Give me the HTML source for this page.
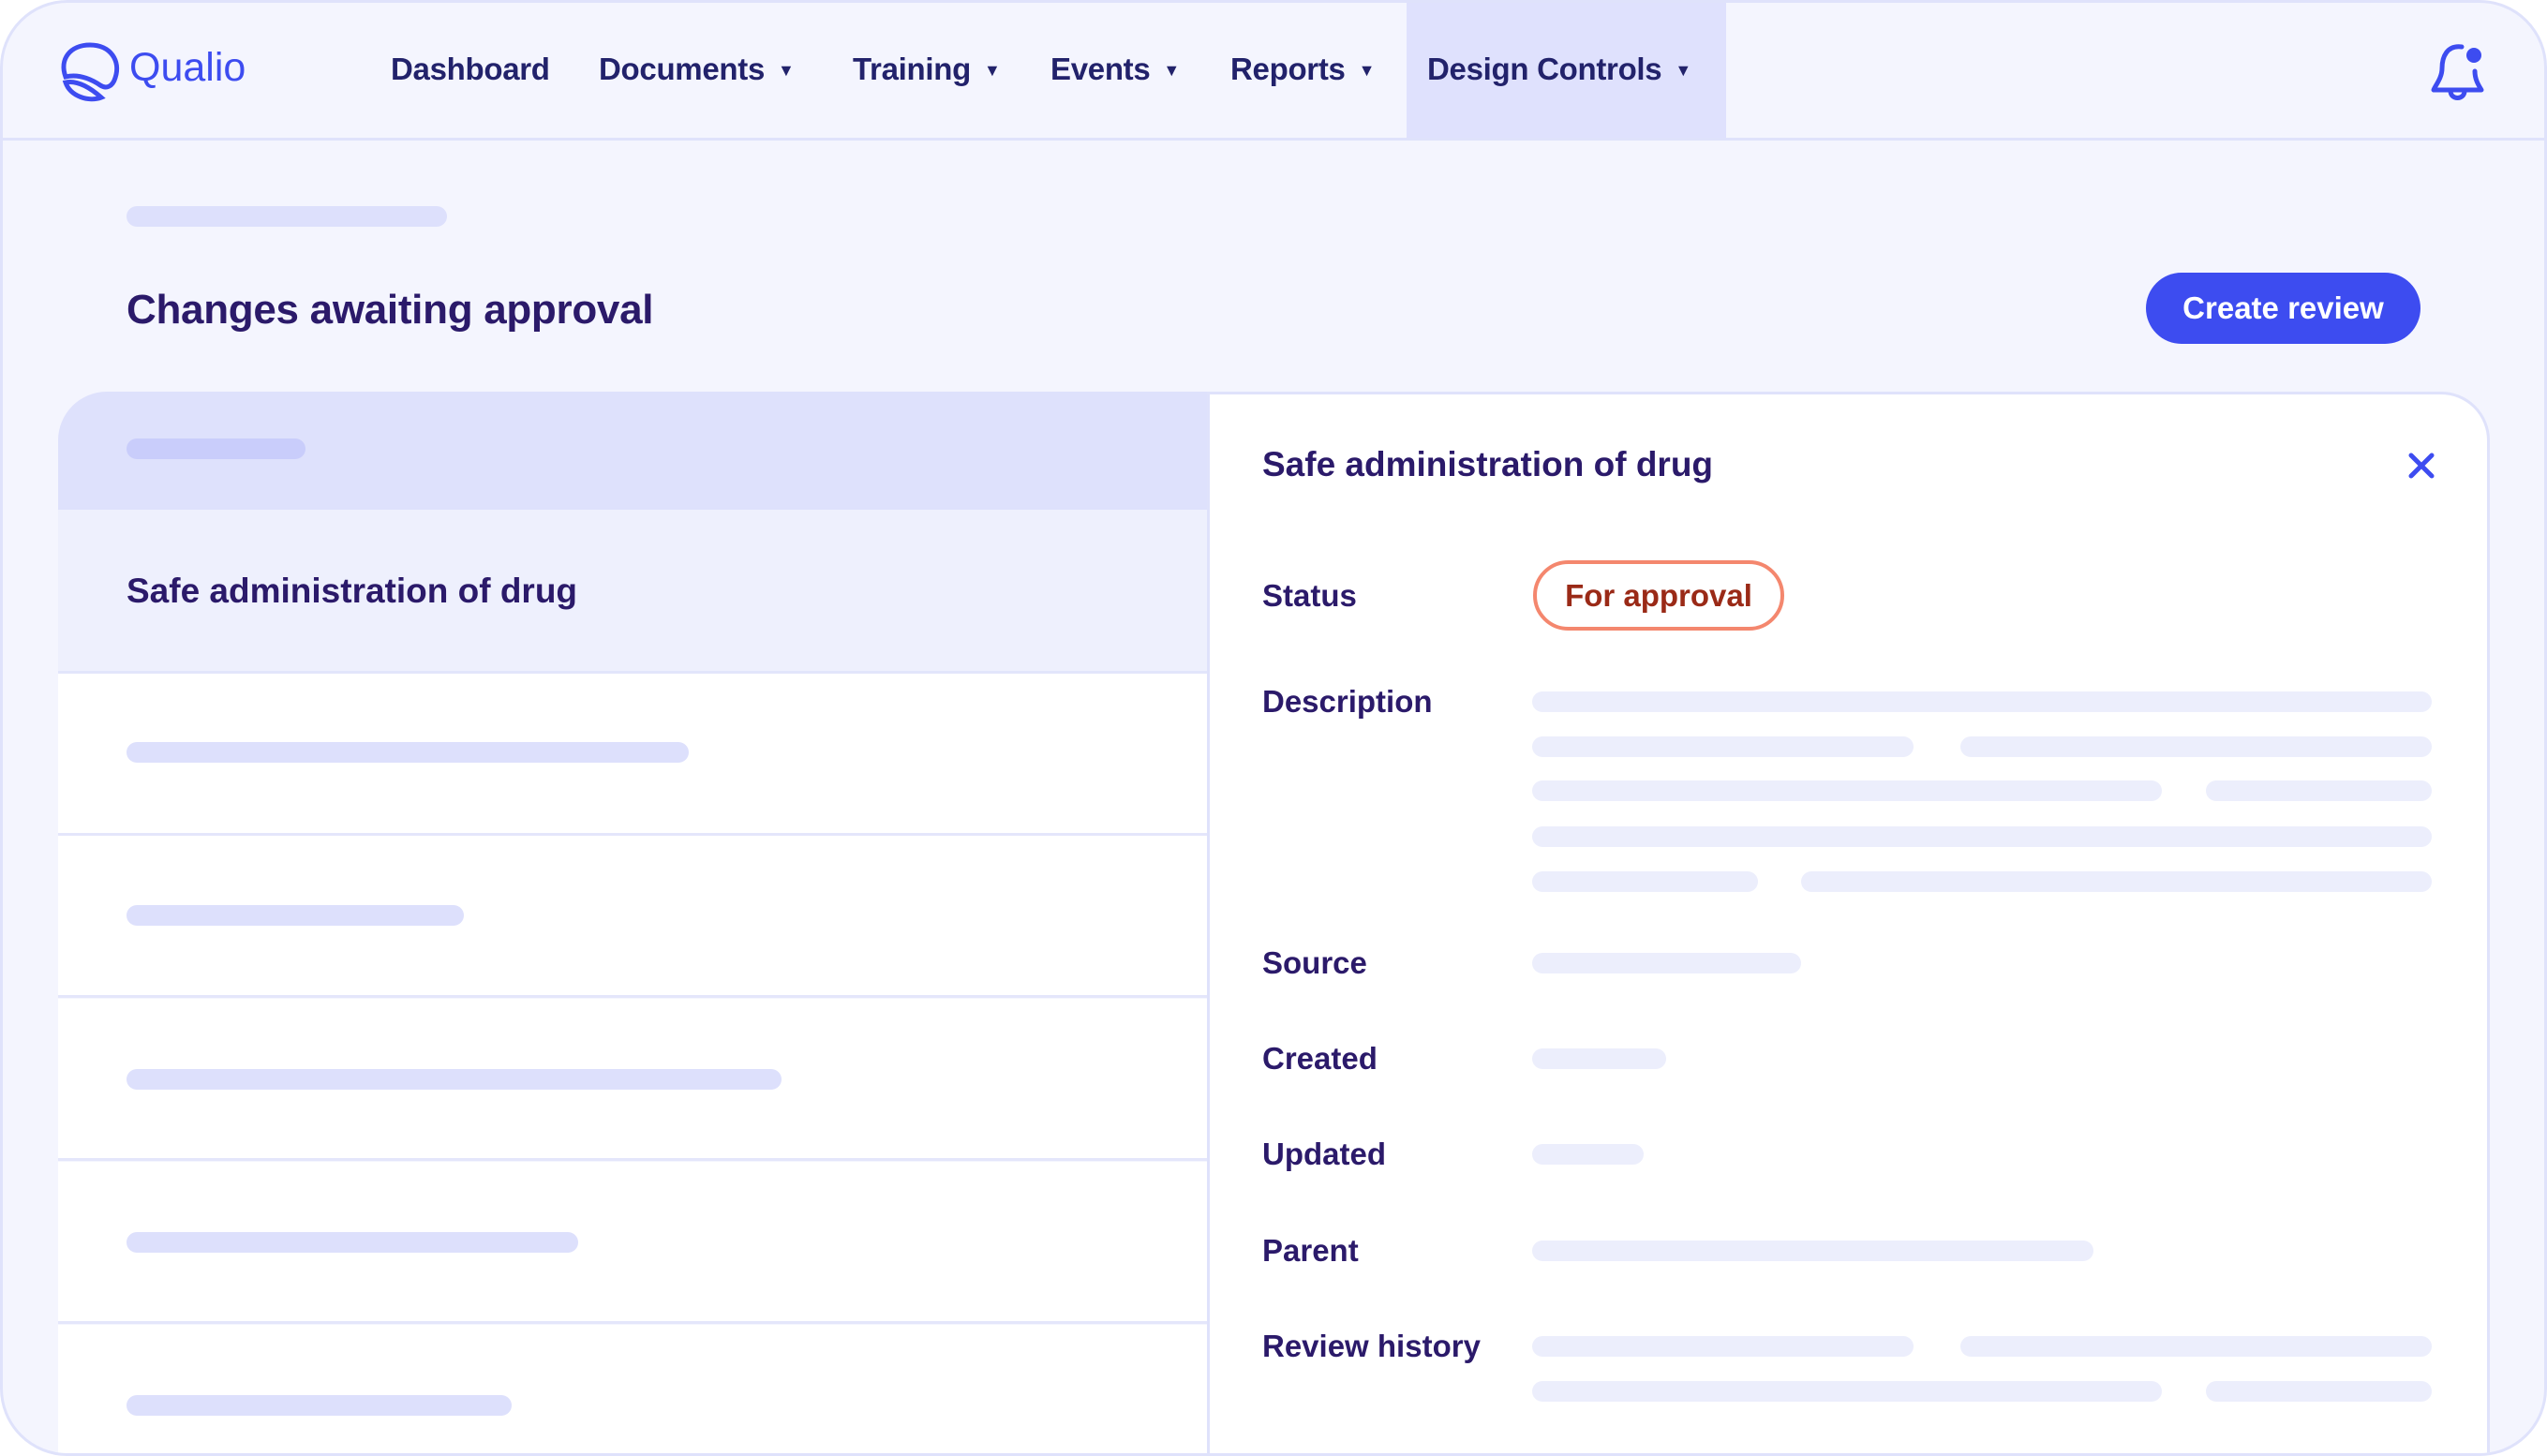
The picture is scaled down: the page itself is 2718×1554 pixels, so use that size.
<!DOCTYPE html>
<html><head><meta charset="utf-8"><style>
*{margin:0;padding:0;box-sizing:border-box}
body{width:2718px;height:1554px;overflow:hidden;background:#fff;font-family:"Liberation Sans",sans-serif;position:relative}
.frame{position:absolute;left:0;top:0;width:2718px;height:1554px;border:3px solid #dfe2fb;border-radius:72px;background:#f4f5fe;overflow:hidden}
.abs{position:absolute}
.nav{position:absolute;top:0;left:0;right:0;height:147px;border-bottom:3px solid #dfe2fb}
.ni{position:absolute;top:52px;font-size:33px;font-weight:bold;color:#22226b;white-space:nowrap;letter-spacing:-0.3px}
.ni .c{font-size:18px;margin-left:14px;vertical-align:4px}
.bar{position:absolute;height:22px;border-radius:11px;background:#eceefc}
.lbar{background:#dde0fc}
.lab{position:absolute;left:1347px;font-size:33px;font-weight:bold;color:#2b1a6a;transform:translateY(-50%);white-space:nowrap}
.row{position:absolute;left:62px;width:1226px;height:173px;background:#fff;border-bottom:3px solid #e4e6fb}
</style></head><body>
<div class="frame">
 <div class="nav">
  <svg class="abs" style="left:58px;top:40px" width="70" height="70" viewBox="58 40 70 70" fill="none" stroke="#3d4cf0" stroke-width="5" stroke-linecap="round">
   <path d="M67 79 C60 60 72 45 93 45 C115 45 126 62 120 80 C117 90 110 92 104 88 C92 80 80 76 67 79 Z"/>
   <path d="M67 85 C80 82 95 92 105 101 C92 106 72 100 67 85 Z"/>
  </svg>
  <div class="abs" style="left:135px;top:45px;font-size:43px;color:#3d4cf0">Qualio</div>
  <div class="ni" style="left:414px">Dashboard</div>
  <div class="ni" style="left:636px">Documents<span class="c">▼</span></div>
  <div class="ni" style="left:907px">Training<span class="c">▼</span></div>
  <div class="ni" style="left:1118px">Events<span class="c">▼</span></div>
  <div class="ni" style="left:1310px">Reports<span class="c">▼</span></div>
  <div class="abs" style="left:1498px;top:0;width:341px;height:144px;background:#dfe1fd"></div>
  <div class="ni" style="left:1520px">Design Controls<span class="c">▼</span></div>
  <svg class="abs" style="left:2585px;top:40px" width="70" height="70" viewBox="2585 40 70 70" fill="none" stroke="#3d4cf0" stroke-width="5" stroke-linecap="round" stroke-linejoin="round">
   <path d="M2624 47 C2608 45 2603 58 2603 70 C2603 80 2596 88 2594 93 L2645 93 C2642 88 2638 82 2638 73"/>
   <path d="M2612 94 C2612 104 2627 104 2627 94"/>
   <circle cx="2637" cy="56" r="8" fill="#3d4cf0" stroke="none"/>
  </svg>
 </div>
 <div class="bar lbar" style="left:132px;top:217px;width:342px"></div>
 <div class="abs" style="left:132px;top:303px;font-size:44px;font-weight:bold;color:#2b1a6a;letter-spacing:-0.3px">Changes awaiting approval</div>
 <div class="abs" style="left:2287px;top:288px;width:293px;height:76px;border-radius:38px;background:#3d4cf0;color:#fff;font-size:33px;font-weight:bold;text-align:center;line-height:76px">Create review</div>

 <!-- left list -->
 <div class="abs" style="left:59px;top:415px;width:1226px;height:126px;background:#dee1fc;border-radius:52px 0 0 0"></div>
 <div class="bar" style="left:132px;top:465px;width:191px;background:#c9cdfb"></div>
 <div class="abs" style="left:59px;top:541px;width:1226px;height:175px;background:#eef0fd;border-bottom:3px solid #e2e5fb"></div>
 <div class="abs" style="left:132px;top:607px;font-size:37px;font-weight:bold;color:#2b1a6a">Safe administration of drug</div>
 <div class="row" style="left:59px;top:716px"></div><div class="bar lbar" style="left:132px;top:789px;width:600px"></div>
 <div class="row" style="left:59px;top:889px"></div><div class="bar lbar" style="left:132px;top:963px;width:360px"></div>
 <div class="row" style="left:59px;top:1063px"></div><div class="bar lbar" style="left:132px;top:1138px;width:699px"></div>
 <div class="row" style="left:59px;top:1237px"></div><div class="bar lbar" style="left:132px;top:1312px;width:482px"></div>
 <div class="row" style="left:59px;top:1411px;border-bottom:none"></div><div class="bar lbar" style="left:132px;top:1486px;width:411px"></div>

 <!-- right card -->
 <div class="abs" style="left:1285px;top:415px;width:1369px;height:1200px;background:#fff;border:3px solid #dfe2fb;border-radius:0 52px 0 0"></div>
 <div class="abs" style="left:1344px;top:472px;font-size:37px;font-weight:bold;color:#2b1a6a">Safe administration of drug</div>
 <svg class="abs" style="left:2566px;top:479px" width="30" height="30" viewBox="0 0 30 30" stroke="#3d4cf0" stroke-width="5" stroke-linecap="round"><path d="M4 4L26 26M26 4L4 26"/></svg>
 <div class="lab" style="top:633px;left:1344px">Status</div>
 <div class="abs" style="left:1633px;top:595px;width:268px;height:75px;border:4px solid #f4876e;border-radius:38px;color:#9a2a17;font-size:33px;font-weight:bold;text-align:center;line-height:67px">For approval</div>
 <div class="lab" style="top:746px;left:1344px">Description</div>
 <div class="bar" style="left:1632px;top:735px;width:960px"></div>
 <div class="bar" style="left:1632px;top:783px;width:407px"></div><div class="bar" style="left:2089px;top:783px;width:503px"></div>
 <div class="bar" style="left:1632px;top:830px;width:672px"></div><div class="bar" style="left:2351px;top:830px;width:241px"></div>
 <div class="bar" style="left:1632px;top:879px;width:960px"></div>
 <div class="bar" style="left:1632px;top:927px;width:241px"></div><div class="bar" style="left:1919px;top:927px;width:673px"></div>
 <div class="lab" style="top:1025px;left:1344px">Source</div><div class="bar" style="left:1632px;top:1014px;width:287px"></div>
 <div class="lab" style="top:1127px;left:1344px">Created</div><div class="bar" style="left:1632px;top:1116px;width:143px"></div>
 <div class="lab" style="top:1229px;left:1344px">Updated</div><div class="bar" style="left:1632px;top:1218px;width:119px"></div>
 <div class="lab" style="top:1332px;left:1344px">Parent</div><div class="bar" style="left:1632px;top:1321px;width:599px"></div>
 <div class="lab" style="top:1434px;left:1344px">Review history</div>
 <div class="bar" style="left:1632px;top:1423px;width:407px"></div><div class="bar" style="left:2089px;top:1423px;width:503px"></div>
 <div class="bar" style="left:1632px;top:1471px;width:672px"></div><div class="bar" style="left:2351px;top:1471px;width:241px"></div>
</div>
</body></html>
